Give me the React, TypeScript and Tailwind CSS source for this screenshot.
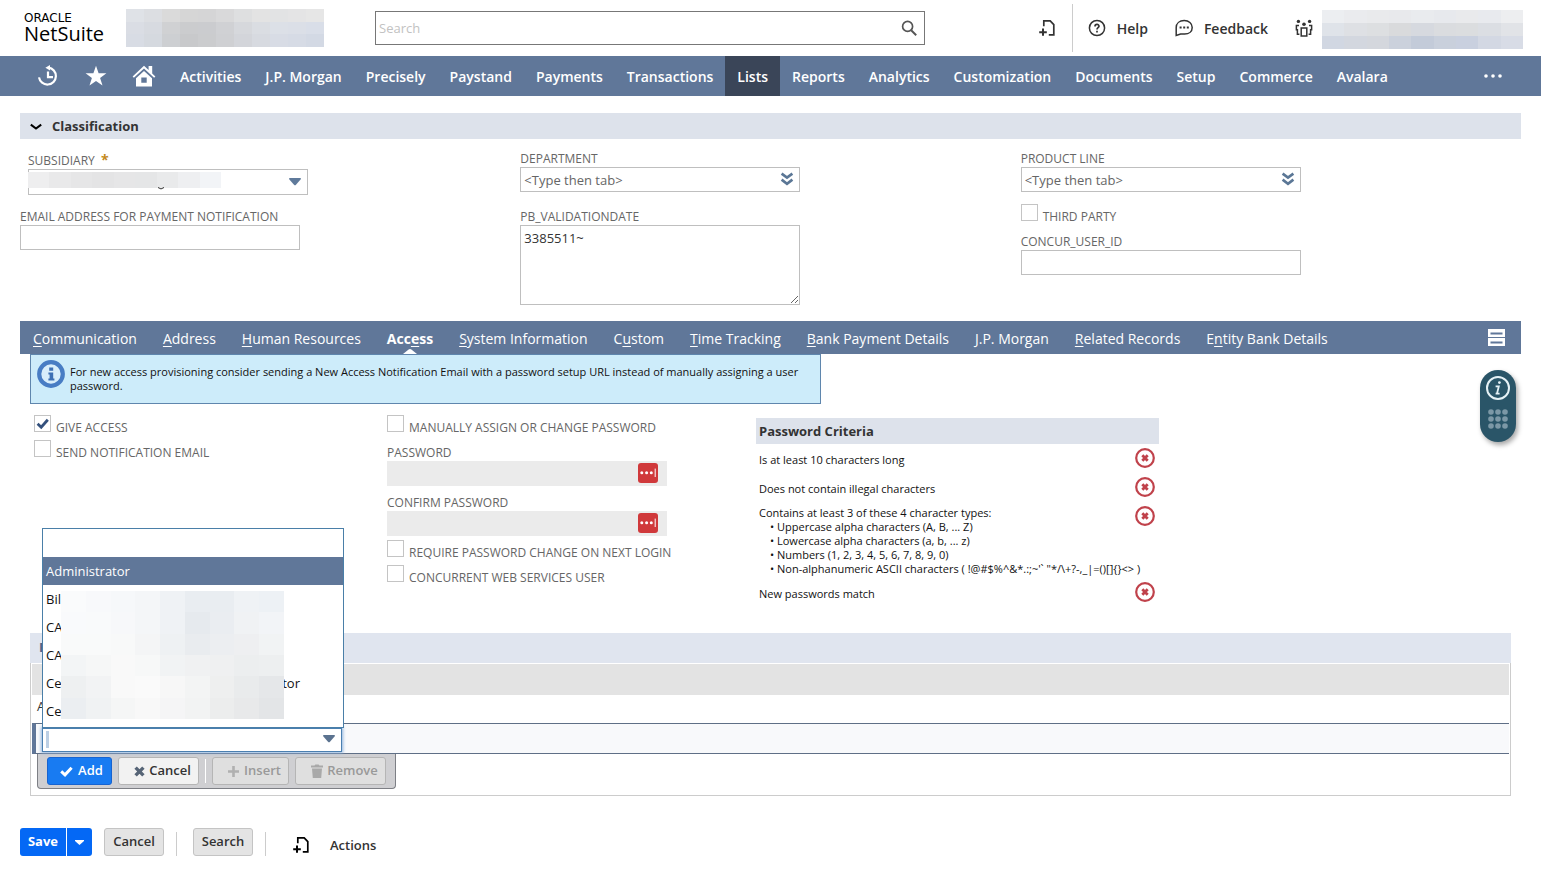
import { useState } from 'react';
import { clsx } from 'clsx';

interface MosaicProps {
    rows: string[][];
    className?: string;
}

interface CheckFieldProps {
    id: string;
    label: string;
    defaultChecked?: boolean;
}

interface TabItem {
    label: string;
    accessKey?: number;
}

const NAV_ITEMS = [
    'Activities',
    'J.P. Morgan',
    'Precisely',
    'Paystand',
    'Payments',
    'Transactions',
    'Lists',
    'Reports',
    'Analytics',
    'Customization',
    'Documents',
    'Setup',
    'Commerce',
    'Avalara'
];

// accessKey is the index of the underlined letter
const TABS: TabItem[] = [
    { label: 'Communication', accessKey: 0 },
    { label: 'Address', accessKey: 0 },
    { label: 'Human Resources', accessKey: 0 },
    { label: 'Access', accessKey: 3 },
    { label: 'System Information', accessKey: 0 },
    { label: 'Custom', accessKey: 1 },
    { label: 'Time Tracking', accessKey: 0 },
    { label: 'Bank Payment Details', accessKey: 0 },
    { label: 'J.P. Morgan' },
    { label: 'Related Records', accessKey: 0 },
    { label: 'Entity Bank Details', accessKey: 1 }
];

const ROLE_OPTIONS = ['', 'Administrator', 'Bil', 'CA', 'CA', 'Ce', 'Ce'];

const CHARACTER_TYPES = [
    'Uppercase alpha characters (A, B, ... Z)',
    'Lowercase alpha characters (a, b, ... z)',
    'Numbers (1, 2, 3, 4, 5, 6, 7, 8, 9, 0)',
    'Non-alphanumeric ASCII characters ( !@#$%^&*.:;~\'` "*/\\+?-,_|=()[]{}<> )'
];

const COMPANY_MOSAIC = [
    ['#dfe2e7', '#dcdee2', '#dadada', '#d6d6d6', '#d5d5d6', '#d9d9da', '#dedfe0', '#e3e3e3', '#e2e3e4', '#e4e4e5', '#e6e6e6'],
    ['#dadde4', '#d7dae0', '#d0d1d3', '#cbccce', '#cbcccf', '#d0d1d4', '#d6d8dc', '#dadde2', '#dce0e7', '#dbdfe7', '#d9dee8'],
    ['#d8dce4', '#d5d9df', '#cdcfd2', '#c8c9cb', '#cbccce', '#cfd0d3', '#d3d5da', '#d7dae0', '#d8dce5', '#d6dbe5', '#d3d9e4']
];

const USER_MOSAIC = [
    ['#eceef1', '#eaebee', '#e9eaec', '#e8e9ec', '#e9ebee', '#e7e9ed', '#e9eaec', '#e8eaee', '#edeef0'],
    ['#dfe3e9', '#dee0e4', '#dddfe1', '#d9dadc', '#d6d9df', '#dadcdf', '#dbdddf', '#dbdee3', '#e1e3e7'],
    ['#d1d7e2', '#d3d7df', '#d4d7dd', '#cbd1dc', '#c3cbd9', '#c9d0dc', '#c9d0df', '#d3d8e3', '#d8dce6']
];

const SUBSIDIARY_MOSAIC = [['#eeeeef', '#e9e9ea', '#e6e6e7', '#e4e4e5', '#e6e6e7', '#e5e6e7', '#e9eaeb', '#eeeff1', '#f2f4f7']];

const ROLE_MOSAIC = [
    ['#fafbfc', '#f8f9fb', '#f6f8fa', '#f4f6f8', '#eff2f5', '#e9edf1', '#e9edf1', '#eff2f5', '#edf1f5'],
    ['#f9fafc', '#f9fafb', '#f7f8fa', '#f4f6f8', '#eff2f5', '#e6eaee', '#eaedf1', '#f0f2f4', '#f2f4f7'],
    ['#f9fafa', '#f9fafa', '#f8f9f9', '#f4f5f6', '#eef1f3', '#e9ecef', '#eceef1', '#eeeff1', '#f1f3f4'],
    ['#f3f5f6', '#f6f7f7', '#f9f9f9', '#f7f8f8', '#f1f3f4', '#f0f1f2', '#eff0f1', '#eceeef', '#edeff0'],
    ['#eef0f1', '#f2f3f4', '#f9f9f9', '#fafafa', '#f7f7f7', '#f3f4f4', '#eeefef', '#e9ebec', '#e5e7e9'],
    ['#ebeef1', '#f0f2f3', '#f5f6f6', '#f8f8f8', '#f5f5f6', '#f2f3f3', '#eceded', '#e8e9ea', '#e3e5e7']
];

function Mosaic({ rows, className }: MosaicProps) {
    const cols = rows[0].length;
    return (
        <svg
            viewBox={`0 0 ${cols} ${rows.length}`}
            preserveAspectRatio="none"
            shapeRendering="crispEdges"
            className={className}
            aria-hidden="true"
        >
            {rows.map((row, y) => row.map((fill, x) => <rect key={`${x}-${y}`} x={x} y={y} width="1" height="1" fill={fill} />))}
        </svg>
    );
}

function NewRecordIcon({ className }: { className?: string }) {
    return (
        <svg viewBox="0 0 18 18" className={clsx('size-[18px]', className)} fill="none" stroke="currentColor" aria-hidden="true">
            <path d="M5.8 7.2V1.8H12.2L15.8 5.6V15.8H10.8" strokeWidth="1.7" />
            <path d="M5 9.6V16.8M1.2 13.2H8.8" strokeWidth="2" />
        </svg>
    );
}

function DoubleChevron() {
    return (
        <svg
            viewBox="0 0 14 14"
            className="pointer-events-none absolute right-[6px] top-[5px] size-[14px]"
            fill="none"
            stroke="#5b7796"
            strokeWidth="2.6"
            aria-hidden="true"
        >
            <path d="M1.6 1.6 7 5.6 12.4 1.6M1.6 7.6 7 11.8 12.4 7.6" />
        </svg>
    );
}

function PasswordManagerIcon() {
    return (
        <svg viewBox="0 0 20 20" className="pointer-events-none absolute right-[9px] top-[2px] size-5" aria-hidden="true">
            <rect width="20" height="20" rx="3" fill="#d0393b" />
            <circle cx="3.8" cy="9.8" r="1.5" fill="#fff" />
            <circle cx="8.6" cy="9.8" r="1.5" fill="#fff" />
            <circle cx="13.3" cy="9.8" r="1.5" fill="#fff" />
            <path d="M17.2 5.6V14" stroke="#fff" strokeWidth="1" />
        </svg>
    );
}

function FailedIcon() {
    return (
        <svg viewBox="0 0 20 20" className="size-5" fill="none" role="img" aria-label="Not met">
            <circle cx="10" cy="10" r="8.8" stroke="#c0424b" strokeWidth="2.2" />
            <path d="m7.3 7.3 5.4 5.4M12.7 7.3l-5.4 5.4" stroke="#c0424b" strokeWidth="2.8" />
        </svg>
    );
}

function FieldLabel({ htmlFor, children }: { htmlFor: string; children: React.ReactNode }) {
    return (
        <label htmlFor={htmlFor} className="block h-[18px] text-[12px] leading-5 text-[#666]">
            {children}
        </label>
    );
}

function TextField({ id, defaultValue, picker }: { id: string; defaultValue?: string; picker?: boolean }) {
    return (
        <div className="relative w-[280px]">
            <input
                id={id}
                type="text"
                defaultValue={defaultValue}
                className="block h-[25px] w-full border border-[#bfbfbf] bg-white px-[3px] text-[13px] text-[#666] outline-none"
            />
            {picker && <DoubleChevron />}
        </div>
    );
}

function PasswordField({ id }: { id: string }) {
    return (
        <div className="relative w-[280px]">
            <input id={id} type="password" disabled className="block h-[25px] w-full bg-[#ebebeb] px-1 text-[13px]" />
            <PasswordManagerIcon />
        </div>
    );
}

function CheckField({ id, label, defaultChecked }: CheckFieldProps) {
    return (
        <div className="flex h-[25px] items-start gap-[5px]">
            <span className="relative size-[17px]">
                <input
                    id={id}
                    type="checkbox"
                    defaultChecked={defaultChecked}
                    className="peer block size-[17px] appearance-none border border-[#c4c4c4] bg-white"
                />
                <svg
                    viewBox="0 0 17 17"
                    className="pointer-events-none absolute inset-0 hidden size-[17px] peer-checked:block"
                    fill="none"
                    stroke="#33507c"
                    strokeWidth="2.8"
                    aria-hidden="true"
                >
                    <path d="m3.6 8.8 3.6 3.4 6.6-7.4" />
                </svg>
            </span>
            <label htmlFor={id} className="pt-1 text-[12px] leading-[18px] text-[#666]">
                {label}
            </label>
        </div>
    );
}

function Header() {
    return (
        <header className="flex h-14 items-center pl-6 pr-[18px] text-[#333]">
            <div className="flex w-[102px] flex-col text-black">
                <span className="font-['DejaVu_Sans',sans-serif] text-[12px] leading-[12px]">ORACLE</span>
                <span className="text-[20px] leading-[20px]">NetSuite</span>
            </div>
            <Mosaic rows={COMPANY_MOSAIC} className="h-[38px] w-[198px]" />
            <form role="search" className="relative ml-[51px] w-[550px]" onSubmit={(e) => e.preventDefault()}>
                <input
                    type="text"
                    aria-label="Search"
                    placeholder="Search"
                    className="block h-[34px] w-full border border-[#777] px-[3px] text-[13px] outline-none placeholder:text-[#c2c2c2]"
                />
                <button type="submit" aria-label="Run search" className="absolute right-2 top-[9px]">
                    <svg viewBox="0 0 16 16" className="size-4" fill="none" stroke="#555" strokeWidth="1.7">
                        <circle cx="6.6" cy="6.4" r="5" />
                        <path d="m10.2 10.2 5 5" strokeWidth="2" />
                    </svg>
                </button>
            </form>

            <div className="ml-auto flex items-center">
                <button type="button" aria-label="Create new">
                    <NewRecordIcon />
                </button>
                <span className="ml-4 mr-[15px] h-12 w-px bg-[#ccc]" />
                <a href="#help" className="flex items-center gap-[11px] text-[14px] font-semibold">
                    <svg viewBox="0 0 18 18" className="size-[18px]" fill="none" stroke="currentColor" strokeWidth="1.5">
                        <circle cx="9" cy="9" r="7.6" />
                        <path d="M7 7.4c0-2.6 4-2.6 4-.2 0 1.5-2 1.5-2 3.2M9 11.8v1.6" strokeWidth="1.7" />
                    </svg>
                    Help
                </a>
                <a href="#feedback" className="ml-[26px] flex items-center gap-[10px] text-[14px] font-semibold">
                    <svg viewBox="0 0 20 18" className="h-[18px] w-5" fill="none" stroke="currentColor" strokeWidth="1.5">
                        <path d="M2.2 16.4V8.6C2.2 4.2 5.6 1.6 10.2 1.6s8 2.8 8 6.8-3.2 6.6-7.6 6.6H6.6z" />
                        <path d="M5.6 8.4h2M9.2 8.4h2M12.8 8.4h2" strokeWidth="2" />
                    </svg>
                    Feedback
                </a>
                <button type="button" aria-label="Change role" className="ml-[26px]">
                    <svg viewBox="0 0 20 20" className="size-5" fill="none" stroke="currentColor" strokeWidth="1.5">
                        <path d="M5 7.6H2.4v4.2h1v4.4h2M15 7.6h2.6v4.2h-1v4.4h-2M7.2 10h5.6v8H7.2z" />
                        <g fill="currentColor" stroke="none">
                            <circle cx="4.4" cy="3.4" r="1.7" />
                            <circle cx="15.6" cy="3.4" r="1.7" />
                            <circle cx="10" cy="6.2" r="1.8" />
                        </g>
                    </svg>
                </button>
                <Mosaic rows={USER_MOSAIC} className="ml-2 mt-[2px] h-[39px] w-[201px]" />
            </div>
        </header>
    );
}

function NavBar() {
    return (
        <nav className="flex h-10 items-stretch bg-[#607799] pl-6 pr-6 text-[14px] font-semibold text-white">
            <a href="#recent" aria-label="Recent records" className="flex w-12 items-center justify-center">
                <svg viewBox="0 0 22 22" className="size-[22px]" fill="none" stroke="currentColor" strokeWidth="2.2">
                    <path d="M11.4 2.6A8.5 8.5 0 1 1 2 12.4" />
                    <path d="M11 6.4v5.8h5" />
                    <path d="M13 0v5.6L8.4 2.8z" fill="currentColor" stroke="none" />
                </svg>
            </a>
            <a href="#shortcuts" aria-label="Shortcuts" className="flex w-12 items-center justify-center">
                <svg viewBox="0 0 22 22" className="size-[22px]" fill="currentColor">
                    <path d="m11 .8 2.6 7.5h7.8l-6.3 4.7 2.4 7.6L11 16l-6.5 4.6L6.9 13 .6 8.3h7.8z" />
                </svg>
            </a>
            <a href="#home" aria-label="Home" className="flex w-12 items-center justify-center">
                <svg viewBox="0 0 24 24" className="size-6" fill="currentColor">
                    <path d="M.6 12.4 12 1.8l4.6 4.2V2h3.6v7.4l3.2 3-1.3 1.4L12 4.6 1.9 13.8z" />
                    <path fillRule="evenodd" d="m12 7 8 7.2v8.4H4v-8.4zM9.3 13.6v5.2h5.4v-5.2z" />
                </svg>
            </a>
            {NAV_ITEMS.map((item) => (
                <a
                    key={item}
                    href={`#${item}`}
                    className={clsx('flex items-center whitespace-nowrap px-3', item === 'Lists' && 'bg-[#3a4558]')}
                >
                    {item}
                </a>
            ))}
            <button type="button" aria-label="More" className="ml-auto flex w-12 items-center justify-center">
                <svg viewBox="0 0 18 4" className="h-1 w-[18px]" fill="currentColor">
                    <circle cx="2" cy="2" r="1.8" />
                    <circle cx="9" cy="2" r="1.8" />
                    <circle cx="16" cy="2" r="1.8" />
                </svg>
            </button>
        </nav>
    );
}

function ClassificationSection() {
    return (
        <section>
            <h2>
                <button
                    type="button"
                    className="flex h-[26px] w-full items-center gap-[10px] bg-[#dde2eb] pl-[10px] pt-px text-[13px] font-bold text-[#333]"
                >
                    <svg viewBox="0 0 12 8" className="h-2 w-3" fill="none" stroke="#000" strokeWidth="2">
                        <path d="m.8 1.6 5.2 4 5.2-4" />
                    </svg>
                    Classification
                </button>
            </h2>
            <div className="grid grid-cols-3 pt-[10px]">
                <div>
                    <div className="ml-2 pt-[2px]">
                        <FieldLabel htmlFor="subsidiary">
                            SUBSIDIARY <span className="ml-[3px] text-[14px] font-bold leading-none text-[#c48a1c]">*</span>
                        </FieldLabel>
                        <div className="relative w-[280px]">
                            <select id="subsidiary" className="block h-[26px] w-full appearance-none border border-[#bfbfbf] bg-white" />
                            <Mosaic rows={SUBSIDIARY_MOSAIC} className="pointer-events-none absolute left-0 top-[3px] h-4 w-[193px]" />
                            <svg viewBox="0 0 6 3" className="pointer-events-none absolute left-[130px] top-[18px] h-[3px] w-[6px]">
                                <path d="M0 .5Q3 3.4 6 .5" fill="none" stroke="#333" />
                            </svg>
                            <svg viewBox="0 0 12 8" className="pointer-events-none absolute right-[7px] top-[9px] h-2 w-3" fill="#5f7a9b">
                                <path d="M1 0h10q1.6.2.6 1.6L7 6.8Q6 7.8 5 6.8L.4 1.6Q-.6.2 1 0z" />
                            </svg>
                        </div>
                    </div>
                    <div className="pt-3">
                        <FieldLabel htmlFor="email">EMAIL ADDRESS FOR PAYMENT NOTIFICATION</FieldLabel>
                        <TextField id="email" />
                    </div>
                </div>
                <div>
                    <FieldLabel htmlFor="department">DEPARTMENT</FieldLabel>
                    <TextField id="department" defaultValue="<Type then tab>" picker />
                    <div className="pt-[15px]">
                        <FieldLabel htmlFor="validation-date">PB_VALIDATIONDATE</FieldLabel>
                        <textarea
                            id="validation-date"
                            defaultValue="3385511~"
                            className="block h-20 w-[280px] border border-[#bfbfbf] bg-white px-[3px] py-[3px] text-[13px] leading-[18px] text-[#333] outline-none"
                        />
                    </div>
                </div>
                <div>
                    <FieldLabel htmlFor="product-line">PRODUCT LINE</FieldLabel>
                    <TextField id="product-line" defaultValue="<Type then tab>" picker />
                    <div className="pb-[3px] pt-3">
                        <CheckField id="third-party" label="THIRD PARTY" />
                    </div>
                    <FieldLabel htmlFor="concur-user">CONCUR_USER_ID</FieldLabel>
                    <TextField id="concur-user" />
                </div>
            </div>
        </section>
    );
}

function TabLabel({ label, accessKey }: TabItem) {
    if (accessKey === undefined) return <>{label}</>;
    return (
        <>
            {label.slice(0, accessKey)}
            <u className="underline-offset-2">{label[accessKey]}</u>
            {label.slice(accessKey + 1)}
        </>
    );
}

function TabBar({ active, onSelect }: { active: string; onSelect: (label: string) => void }) {
    return (
        <div role="tablist" className="mt-4 flex h-[33px] items-stretch bg-[#607799] text-[14px] text-white">
            {TABS.map((tab) => {
                const isActive = tab.label === active;
                return (
                    <button
                        key={tab.label}
                        type="button"
                        role="tab"
                        aria-selected={isActive}
                        onClick={() => onSelect(tab.label)}
                        className={clsx('relative whitespace-nowrap px-[13px] pt-[2px]', isActive ? 'font-bold' : 'font-medium')}
                    >
                        <TabLabel {...tab} />
                        {isActive && (
                            <svg viewBox="0 0 14 5" className="absolute inset-x-0 bottom-0 mx-auto h-[5px] w-[14px]" fill="#fff">
                                <path d="M0 5 5.6.6Q7-.4 8.4.6L14 5z" />
                            </svg>
                        )}
                    </button>
                );
            })}
            <button type="button" aria-label="Toggle tab layout" className="ml-auto mr-4">
                <svg viewBox="0 0 17 17" className="size-[17px]" aria-hidden="true">
                    <path d="M0 0h17v8H0zM0 9h17v8H0z" fill="#fff" />
                    <path d="M2.5 4.5h12M2.5 13.5h12" stroke="#607799" strokeWidth="2" />
                </svg>
            </button>
        </div>
    );
}

function HelpWidget() {
    return (
        <div className="absolute right-[5px] top-4 flex h-[72px] w-9 flex-col items-center gap-2 rounded-full bg-[#2a5568] pt-[5px] shadow-[2px_3px_5px_rgba(0,0,0,0.35)]">
            <button type="button" aria-label="Information">
                <svg viewBox="0 0 26 26" className="size-[26px]" fill="none" stroke="#e6f2f6">
                    <circle cx="13" cy="13" r="11" strokeWidth="2" />
                    <path d="M10.6 11.4h3.2l-1.8 7.2h2.6M10.6 18.6h2" strokeWidth="1.8" />
                    <circle cx="14.4" cy="7.6" r="1.4" fill="#e6f2f6" stroke="none" />
                </svg>
            </button>
            <svg viewBox="0 0 20 20" className="size-5" fill="#7c98a6" aria-hidden="true">
                {[3, 10, 17].map((y) => [3, 10, 17].map((x) => <circle key={`${x}-${y}`} cx={x} cy={y} r="2.8" />))}
            </svg>
        </div>
    );
}

function PasswordCriteria() {
    return (
        <table className="mt-[3px] w-[403px] table-fixed border-collapse self-start text-[11px] leading-[14px] text-[#111]">
            <colgroup>
                <col />
                <col className="w-6" />
            </colgroup>
            <thead>
                <tr className="h-[26px] bg-[#dde2eb]">
                    <th colSpan={2} className="pl-[3px] text-left text-[13px] font-bold text-[#333]">
                        Password Criteria
                    </th>
                </tr>
            </thead>
            <tbody className="align-top">
                <tr>
                    <td className="pl-[3px] pt-[9px]">Is at least 10 characters long</td>
                    <td className="pb-[5px] pr-1 pt-1">
                        <FailedIcon />
                    </td>
                </tr>
                <tr>
                    <td className="pl-[3px] pt-[9px]">Does not contain illegal characters</td>
                    <td className="pb-[5px] pr-1 pt-1">
                        <FailedIcon />
                    </td>
                </tr>
                <tr>
                    <td className="whitespace-nowrap pb-[2px] pl-[3px] pt-1">
                        Contains at least 3 of these 4 character types:
                        <ul className="pl-[11px]">
                            {CHARACTER_TYPES.map((type) => (
                                <li key={type}>• {type}</li>
                            ))}
                        </ul>
                    </td>
                    <td className="pr-1 pt-1">
                        <FailedIcon />
                    </td>
                </tr>
                <tr>
                    <td className="pl-[3px] pt-[9px]">New passwords match</td>
                    <td className="pb-[5px] pr-1 pt-1">
                        <FailedIcon />
                    </td>
                </tr>
            </tbody>
        </table>
    );
}

function RolePicker() {
    const [selected, setSelected] = useState(1);

    return (
        <div className="relative h-6 w-[300px]">
            <input
                type="text"
                role="combobox"
                aria-label="Role"
                aria-expanded="true"
                aria-controls="role-options"
                className="block h-6 w-full border border-[#4a7fb0] bg-white px-2 text-[13px] shadow-[0_0_3px_1px_#8fb4dd] outline-none"
            />
            <span className="absolute left-1 top-[3px] h-[17px] w-[3px] bg-[#bccfe4]" />
            <svg viewBox="0 0 12 8" className="pointer-events-none absolute right-[7px] top-[7px] h-2 w-3" fill="#5b7390">
                <path d="M1 0h10q1.6.2.6 1.6L7 6.8Q6 7.8 5 6.8L.4 1.6Q-.6.2 1 0z" />
            </svg>
            <ul
                id="role-options"
                role="listbox"
                className="absolute bottom-full left-0 z-10 w-[302px] border border-[#4a7fa8] bg-white pb-[2px] text-[13px] text-[#111]"
            >
                {ROLE_OPTIONS.map((role, index) => (
                    <li
                        key={index}
                        role="option"
                        aria-selected={index === selected}
                        onClick={() => setSelected(index)}
                        className={clsx('flex h-7 items-center px-[3px] pt-[2px]', index === selected && 'bg-[#607799] text-white')}
                    >
                        {role}
                        {index === 5 && <span className="ml-auto pr-10">tor</span>}
                    </li>
                ))}
                <Mosaic rows={ROLE_MOSAIC} className="pointer-events-none absolute left-[18px] top-[62px] h-32 w-[223px]" />
            </ul>
        </div>
    );
}

function RolesSublist() {
    return (
        <div className="mx-[10px] mt-[26px]">
            <h3 className="flex h-[30px] items-center bg-[#e0e5ef] pl-[9px] text-[13px] font-bold text-[#4d6488]">R</h3>
            <div className="border border-t-0 border-[#ccc] px-px pb-[6px] pt-px">
                <table className="w-full border-separate border-spacing-0 text-[13px]">
                    <thead>
                        <tr className="h-[31px] bg-[#e3e3e3]">
                            <th aria-label="Role" />
                        </tr>
                    </thead>
                    <tbody>
                        <tr className="h-7">
                            <td className="pb-1 pl-[5px] text-[#333]">A</td>
                        </tr>
                        <tr>
                            <td className="border-y border-l-4 border-y-[#5f6f86] border-l-[#607799] bg-[#f8f9fb] pb-px pl-[6px] pt-1">
                                <RolePicker />
                            </td>
                        </tr>
                    </tbody>
                </table>
                <div className="ml-[5px] flex h-[35px] w-[359px] items-center rounded-b border border-t-0 border-[#7d7f85] bg-[#cfcfd2] pl-[9px] text-[13px] font-semibold">
                    <button type="button" className="flex h-7 w-[65px] items-center justify-center gap-[5px] rounded-[3px] border border-[#1763d0] bg-[#187bf2] pl-1 text-white">
                        <svg viewBox="0 0 13 11" className="h-[11px] w-[13px]" fill="none" stroke="currentColor" strokeWidth="3">
                            <path d="m1.2 5.4 3.8 3.4 6.6-7" />
                        </svg>
                        Add
                    </button>
                    <button type="button" className="ml-[6px] flex h-7 w-[81px] items-center justify-center gap-1 rounded-[3px] border border-[#b5b5b5] bg-[#f2f2f2] pl-2 text-[#333]">
                        <svg viewBox="0 0 11 11" className="size-[11px]" fill="none" stroke="#566476" strokeWidth="3.4">
                            <path d="m1.6 1.6 7.8 7.8M9.4 1.6 1.6 9.4" />
                        </svg>
                        Cancel
                    </button>
                    <span className="ml-[6px] mr-[6px] h-6 w-px bg-white" />
                    <button type="button" disabled className="flex h-7 w-[77px] items-center justify-center gap-[5px] rounded-[3px] border border-[#b5b5b5] bg-[#dfdfdf] pl-2 text-[#999]">
                        <svg viewBox="0 0 11 11" className="size-[11px]" fill="none" stroke="#b0b0b0" strokeWidth="2.6">
                            <path d="M5.5 0v11M0 5.5h11" />
                        </svg>
                        Insert
                    </button>
                    <button type="button" disabled className="ml-[6px] flex h-7 w-[91px] items-center justify-center gap-1 rounded-[3px] border border-[#b5b5b5] bg-[#dfdfdf] pl-2 text-[#999]">
                        <svg viewBox="0 0 12 14" className="h-[14px] w-3" fill="#a9a9a9">
                            <path d="M0 1.6h3.6L4.4.4h3.2l.8 1.2H12v1.8H0zM1 4.4h10L10.2 14H1.8z" />
                        </svg>
                        Remove
                    </button>
                </div>
            </div>
        </div>
    );
}

function AccessPanel() {
    return (
        <section className="relative">
            <div className="mx-[10px] flex h-[50px] max-w-[791px] gap-[5px] border border-[#5f86ad] bg-[#cdecfa] pl-[6px] text-[11px] leading-[14px] text-[#111]">
                <svg viewBox="0 0 28 28" className="mt-[5px] size-7 shrink-0" aria-hidden="true">
                    <circle cx="14" cy="14" r="11.8" fill="#d9eefb" stroke="#487dc4" strokeWidth="4.2" />
                    <path d="M12.2 7.6h4v3.2h-4zM11.4 12.4h4.8v6h1.2v2h-6v-2h1.2v-4h-1.2z" fill="#3e70b5" />
                </svg>
                <p className="pr-2 pt-[10px]">
                    For new access provisioning consider sending a New Access Notification Email with a password setup URL instead of manually
                    assigning a user password.
                </p>
            </div>
            <HelpWidget />

            <div className="flex pl-[14px] pt-[11px]">
                <div className="w-[353px]">
                    <CheckField id="give-access" label="GIVE ACCESS" defaultChecked />
                    <CheckField id="send-notification" label="SEND NOTIFICATION EMAIL" />
                </div>
                <div className="w-[369px]">
                    <CheckField id="assign-password" label="MANUALLY ASSIGN OR CHANGE PASSWORD" />
                    <div className="pt-[3px]">
                        <FieldLabel htmlFor="password">PASSWORD</FieldLabel>
                        <PasswordField id="password" />
                    </div>
                    <div className="pb-1 pt-[7px]">
                        <FieldLabel htmlFor="confirm-password">CONFIRM PASSWORD</FieldLabel>
                        <PasswordField id="confirm-password" />
                    </div>
                    <CheckField id="require-change" label="REQUIRE PASSWORD CHANGE ON NEXT LOGIN" />
                    <CheckField id="web-services" label="CONCURRENT WEB SERVICES USER" />
                </div>
                <PasswordCriteria />
            </div>

            <RolesSublist />
        </section>
    );
}

function FooterActions() {
    return (
        <footer className="mt-8 flex items-start text-[13px] font-semibold text-[#333]">
            <button type="button" className="h-7 w-[46px] rounded-l-[3px] bg-[#0468f5] font-bold text-white">
                Save
            </button>
            <button type="button" aria-label="More save options" className="ml-px flex h-7 w-[25px] items-center justify-center rounded-r-[3px] bg-[#0468f5]">
                <svg viewBox="0 0 9 5" className="h-[5px] w-[9px]" fill="#fff">
                    <path d="M0 0h9v1L4.5 5 0 1z" />
                </svg>
            </button>
            <button type="button" className="ml-3 h-7 w-[60px] rounded-[3px] border border-[#c4c4c4] bg-[#e4e4e4]">
                Cancel
            </button>
            <span className="ml-3 mr-4 mt-1 h-6 w-px bg-[#ccc]" />
            <button type="button" className="h-7 w-[60px] rounded-[3px] border border-[#c4c4c4] bg-[#e4e4e4]">
                Search
            </button>
            <span className="ml-3 mr-[26px] mt-1 h-6 w-px bg-[#ccc]" />
            <button type="button" className="mt-2 flex items-center gap-5 leading-[18px]">
                <NewRecordIcon className="text-black" />
                Actions
            </button>
        </footer>
    );
}

export default function App() {
    const [activeTab, setActiveTab] = useState('Access');

    return (
        <div className="min-h-screen bg-white font-['Open_Sans',sans-serif]">
            <Header />
            <NavBar />
            <main className="px-5 pb-6 pt-[17px]">
                <ClassificationSection />
                <TabBar active={activeTab} onSelect={setActiveTab} />
                <AccessPanel />
                <FooterActions />
            </main>
        </div>
    );
}
